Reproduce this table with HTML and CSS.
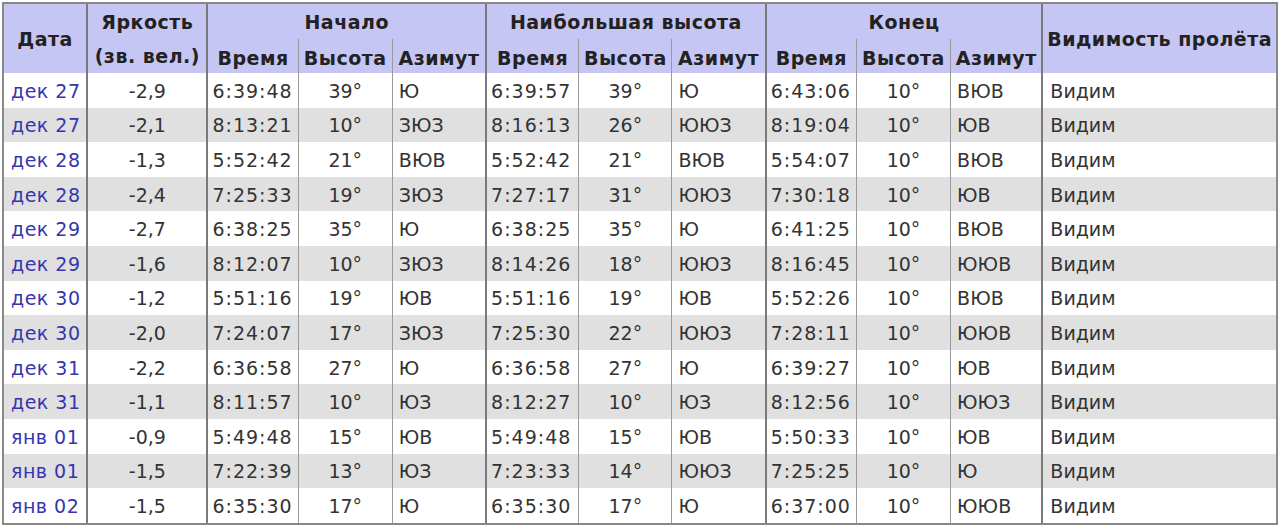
FILE: index.html
```html
<!DOCTYPE html>
<html lang="ru">
<head>
<meta charset="utf-8">
<link rel="stylesheet" href="styles.css">
</head>
<body>
<div class="wrap">
<table class="passes">
  <colgroup>
    <col class="c-date"><col class="c-mag">
    <col class="c-t1"><col class="c-h1"><col class="c-a1">
    <col class="c-t2"><col class="c-h2"><col class="c-a2">
    <col class="c-t3"><col class="c-h3"><col class="c-a3">
    <col class="c-vis">
  </colgroup>
  <thead>
    <tr class="hr1">
      <th rowspan="2" class="first">Дата</th>
      <th class="g mag">Яркость</th>
      <th colspan="3" class="g">Начало</th>
      <th colspan="3" class="g">Наибольшая высота</th>
      <th colspan="3" class="g">Конец</th>
      <th rowspan="2" class="g">Видимость пролёта</th>
    </tr>
    <tr class="hr2">
      <th class="g mag2">(зв. вел.)</th>
      <th class="g">Время</th><th>Высота</th><th>Азимут</th>
      <th class="g">Время</th><th>Высота</th><th>Азимут</th>
      <th class="g">Время</th><th>Высота</th><th>Азимут</th>
    </tr>
  </thead>
  <tbody>
    <tr><td class="d first"><a href="#">дек 27</a></td><td class="m g">-2,9</td><td class="t g">6:39:48</td><td class="h">39°</td><td class="a">Ю</td><td class="t g">6:39:57</td><td class="h">39°</td><td class="a">Ю</td><td class="t g">6:43:06</td><td class="h">10°</td><td class="a">ВЮВ</td><td class="v g">Видим</td></tr>
    <tr><td class="d first"><a href="#">дек 27</a></td><td class="m g">-2,1</td><td class="t g">8:13:21</td><td class="h">10°</td><td class="a">ЗЮЗ</td><td class="t g">8:16:13</td><td class="h">26°</td><td class="a">ЮЮЗ</td><td class="t g">8:19:04</td><td class="h">10°</td><td class="a">ЮВ</td><td class="v g">Видим</td></tr>
    <tr><td class="d first"><a href="#">дек 28</a></td><td class="m g">-1,3</td><td class="t g">5:52:42</td><td class="h">21°</td><td class="a">ВЮВ</td><td class="t g">5:52:42</td><td class="h">21°</td><td class="a">ВЮВ</td><td class="t g">5:54:07</td><td class="h">10°</td><td class="a">ВЮВ</td><td class="v g">Видим</td></tr>
    <tr><td class="d first"><a href="#">дек 28</a></td><td class="m g">-2,4</td><td class="t g">7:25:33</td><td class="h">19°</td><td class="a">ЗЮЗ</td><td class="t g">7:27:17</td><td class="h">31°</td><td class="a">ЮЮЗ</td><td class="t g">7:30:18</td><td class="h">10°</td><td class="a">ЮВ</td><td class="v g">Видим</td></tr>
    <tr><td class="d first"><a href="#">дек 29</a></td><td class="m g">-2,7</td><td class="t g">6:38:25</td><td class="h">35°</td><td class="a">Ю</td><td class="t g">6:38:25</td><td class="h">35°</td><td class="a">Ю</td><td class="t g">6:41:25</td><td class="h">10°</td><td class="a">ВЮВ</td><td class="v g">Видим</td></tr>
    <tr><td class="d first"><a href="#">дек 29</a></td><td class="m g">-1,6</td><td class="t g">8:12:07</td><td class="h">10°</td><td class="a">ЗЮЗ</td><td class="t g">8:14:26</td><td class="h">18°</td><td class="a">ЮЮЗ</td><td class="t g">8:16:45</td><td class="h">10°</td><td class="a">ЮЮВ</td><td class="v g">Видим</td></tr>
    <tr><td class="d first"><a href="#">дек 30</a></td><td class="m g">-1,2</td><td class="t g">5:51:16</td><td class="h">19°</td><td class="a">ЮВ</td><td class="t g">5:51:16</td><td class="h">19°</td><td class="a">ЮВ</td><td class="t g">5:52:26</td><td class="h">10°</td><td class="a">ВЮВ</td><td class="v g">Видим</td></tr>
    <tr><td class="d first"><a href="#">дек 30</a></td><td class="m g">-2,0</td><td class="t g">7:24:07</td><td class="h">17°</td><td class="a">ЗЮЗ</td><td class="t g">7:25:30</td><td class="h">22°</td><td class="a">ЮЮЗ</td><td class="t g">7:28:11</td><td class="h">10°</td><td class="a">ЮЮВ</td><td class="v g">Видим</td></tr>
    <tr><td class="d first"><a href="#">дек 31</a></td><td class="m g">-2,2</td><td class="t g">6:36:58</td><td class="h">27°</td><td class="a">Ю</td><td class="t g">6:36:58</td><td class="h">27°</td><td class="a">Ю</td><td class="t g">6:39:27</td><td class="h">10°</td><td class="a">ЮВ</td><td class="v g">Видим</td></tr>
    <tr><td class="d first"><a href="#">дек 31</a></td><td class="m g">-1,1</td><td class="t g">8:11:57</td><td class="h">10°</td><td class="a">ЮЗ</td><td class="t g">8:12:27</td><td class="h">10°</td><td class="a">ЮЗ</td><td class="t g">8:12:56</td><td class="h">10°</td><td class="a">ЮЮЗ</td><td class="v g">Видим</td></tr>
    <tr><td class="d first"><a href="#">янв 01</a></td><td class="m g">-0,9</td><td class="t g">5:49:48</td><td class="h">15°</td><td class="a">ЮВ</td><td class="t g">5:49:48</td><td class="h">15°</td><td class="a">ЮВ</td><td class="t g">5:50:33</td><td class="h">10°</td><td class="a">ЮВ</td><td class="v g">Видим</td></tr>
    <tr><td class="d first"><a href="#">янв 01</a></td><td class="m g">-1,5</td><td class="t g">7:22:39</td><td class="h">13°</td><td class="a">ЮЗ</td><td class="t g">7:23:33</td><td class="h">14°</td><td class="a">ЮЮЗ</td><td class="t g">7:25:25</td><td class="h">10°</td><td class="a">Ю</td><td class="v g">Видим</td></tr>
    <tr><td class="d first"><a href="#">янв 02</a></td><td class="m g">-1,5</td><td class="t g">6:35:30</td><td class="h">17°</td><td class="a">Ю</td><td class="t g">6:35:30</td><td class="h">17°</td><td class="a">Ю</td><td class="t g">6:37:00</td><td class="h">10°</td><td class="a">ЮЮВ</td><td class="v g">Видим</td></tr>
  </tbody>
</table>
</div>
</body>
</html>
```

FILE: styles.css
```css
html, body {
  margin: 0;
  padding: 0;
  background: #ffffff;
}
.wrap {
  padding: 2px 0 0 2px;
}
.passes {
  border-collapse: separate;
  border-spacing: 0;
  table-layout: fixed;
  width: 1276px;
  border: 2px solid #888888;
  font-family: "DejaVu Sans", Verdana, sans-serif;
  font-size: 19px;
  color: #333333;
}
.c-date { width: 82px; }
.c-mag { width: 120px; }
.c-t1, .c-t3 { width: 91px; }
.c-h1, .c-h3 { width: 94px; }
.c-a1, .c-a2, .c-t2, .c-h2 { width: 93px; }
.c-a3 { width: 91px; }
.c-vis { width: 234px; }

.passes th,
.passes td {
  box-sizing: border-box;
  padding: 0 6px;
  border: none;
  border-left: 1px solid #9a9a9a;
  white-space: nowrap;
  overflow: hidden;
}
.passes .g {
  border-left: 2px solid #7a7a7a;
}
.passes .first {
  border-left: none;
}
.passes th {
  background: #c6c6f4;
  color: #222222;
  font-weight: bold;
  letter-spacing: 0.5px;
  text-align: center;
  padding: 0 2px;
  line-height: 22px;
}
.passes .hr1 th {
  height: 35px;
}
.passes .hr2 th {
  height: 34px;
  padding-top: 3px;
}
.passes .hr2 th.mag2 {
  padding-top: 0;
}
.passes td {
  height: 34.6px;
  line-height: 22px;
  padding-top: 1px;
}
.passes tbody tr:nth-child(even) td {
  background: #e0e0e0;
}
.passes td.d {
  padding-left: 7px;
  letter-spacing: 0.5px;
}
.passes td.d a {
  color: #3535b0;
  text-decoration: none;
}
.passes td.m,
.passes td.h {
  text-align: center;
}
.passes td.t {
  padding-left: 4px;
  letter-spacing: 1px;
}
.passes td.a {
  padding-left: 6px;
}
.passes td.v {
  padding-left: 7px;
}
```
